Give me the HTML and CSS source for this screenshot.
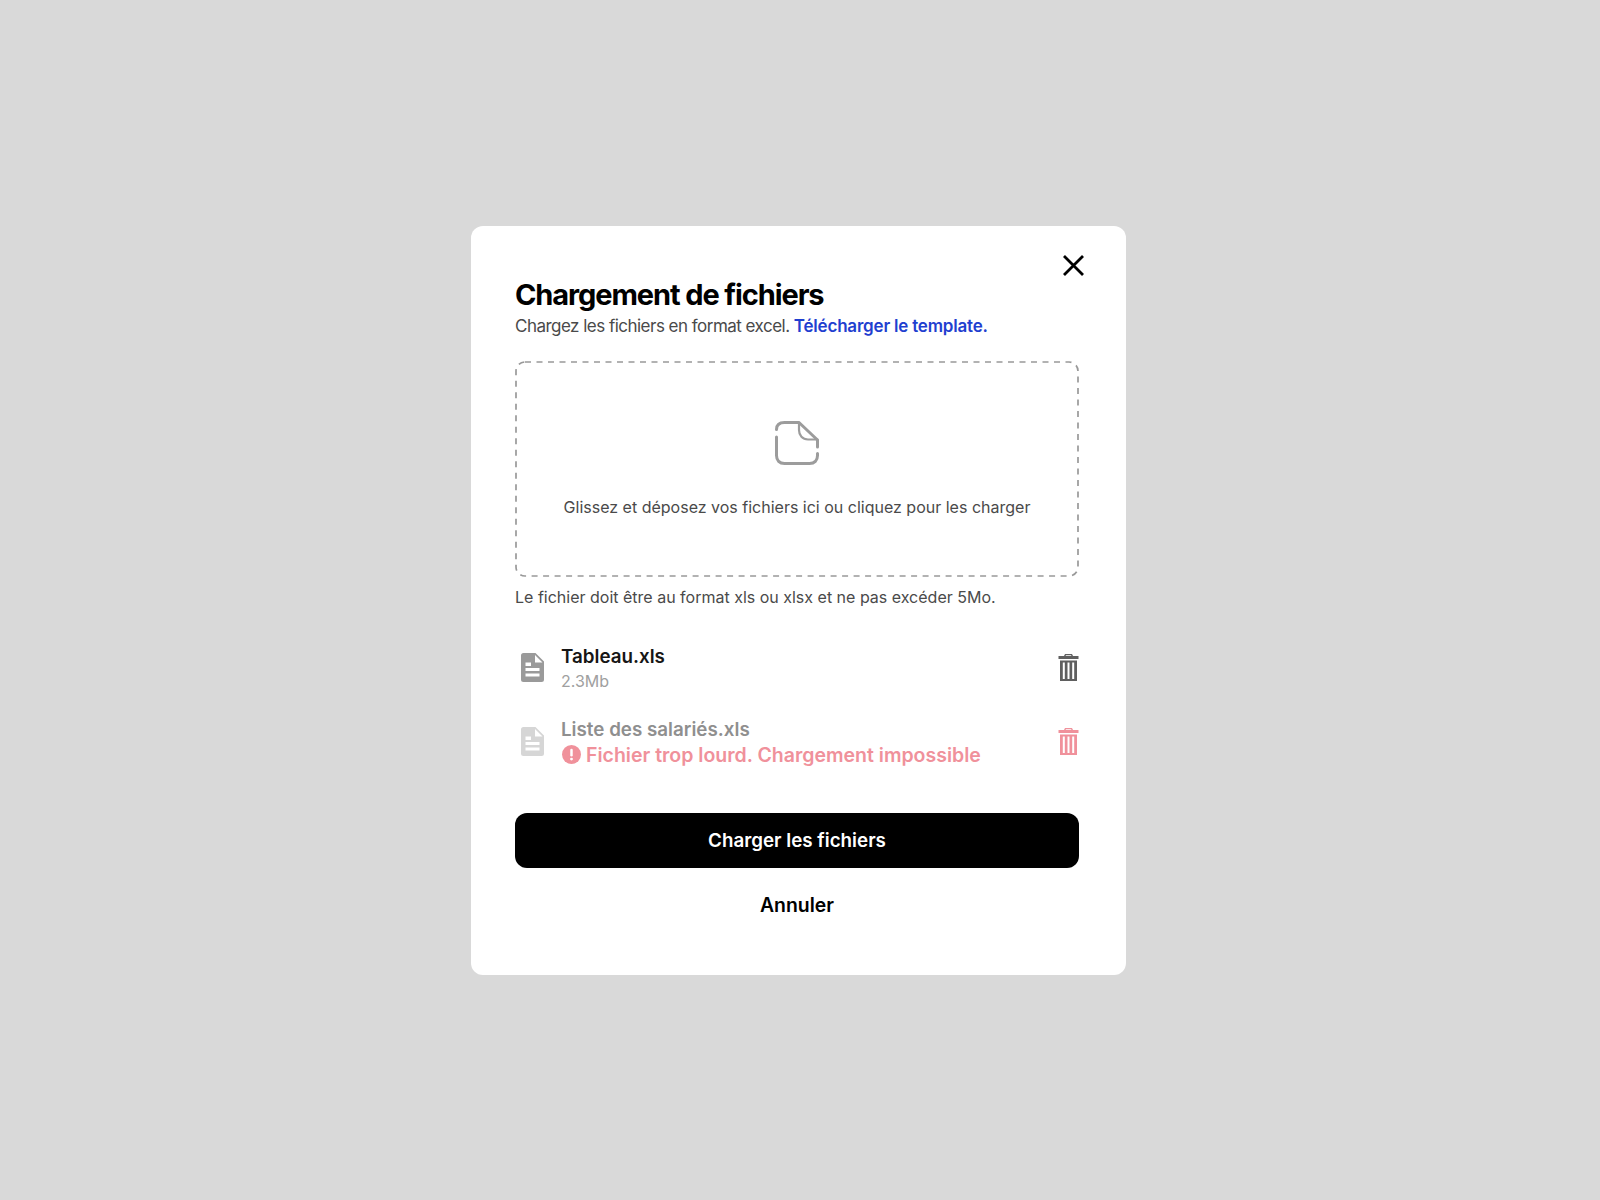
FILE: index.html
```html
<!DOCTYPE html>
<html lang="fr">
<head>
<meta charset="utf-8">
<title>Chargement de fichiers</title>
<link rel="stylesheet" href="styles.css">
</head>
<body>
<div class="modal">
  <button class="close" aria-label="Fermer">
    <svg width="24" height="24" viewBox="0 0 24 24" fill="none" stroke="#000" stroke-width="2.8"><path d="M3 3L22 22M22 3L3 22"/></svg>
  </button>
  <h1 class="title">Chargement de fichiers</h1>
  <p class="sub">Chargez les fichiers en format excel. <a class="link">Télécharger le template.</a></p>
  <div class="drop">
    <svg class="drop-border" width="564" height="216" viewBox="0 0 564 216" fill="none"><rect x="1" y="1" width="562" height="214" rx="9" stroke="#999" stroke-width="1.700" stroke-dasharray="6 5.500"/></svg>
    <svg class="drop-icon" width="46" height="46" viewBox="0 0 46 46" fill="none" stroke="#9c9c9c" stroke-width="3" stroke-linecap="round" stroke-linejoin="round">
      <path d="M2.500 9.500C2.500 5 5.500 2.500 10.500 2.500H25L43.500 20V27"/>
      <path d="M2.500 17V35.500C2.500 40.500 5.500 43.500 10.500 43.500H35.500C40.500 43.500 43.500 40.500 43.500 35.500V33.500"/>
      <path d="M25 2.500V10C25 15.500 28.500 19.500 34 19.500H43.500" stroke-width="2.200"/>
    </svg>
    <p class="drop-text">Glissez et déposez vos fichiers ici ou cliquez pour les charger</p>
  </div>
  <p class="hint">Le fichier doit être au format xls ou xlsx et ne pas excéder 5Mo.</p>
  <div class="files">
    <div class="file">
      <svg class="doc" width="23" height="29" viewBox="0 0 23 29"><path fill="#9a9a9a" fill-rule="evenodd" d="M2.500 0H14.500L23 8.500V26.500A2.500 2.500 0 0 1 20.500 29H2.500A2.500 2.500 0 0 1 0 26.500V2.500A2.500 2.500 0 0 1 2.500 0ZM14 2V9.500H21.500ZM4.500 9.500V13H10V9.500ZM4.500 15V18H18.500V15ZM4.500 20.500V23.500H18.500V20.500Z"/></svg>
      <div class="info">
        <div class="name">Tableau.xls</div>
        <div class="size">2.3Mb</div>
      </div>
      <svg class="trash" width="21" height="27" viewBox="0 0 21 27" fill="#5f5f5f"><path fill-rule="evenodd" d="M7 0H14L15 2H20.500V5H0.500V2H6ZM8 1.200L7.500 2H13.500L13 1.200Z"/><path fill-rule="evenodd" d="M2 6.500H19V27H2ZM4.800 8.500V25H6.800V8.500ZM9.500 8.500V25H11.500V8.500ZM14.200 8.500V25H16.200V8.500Z"/></svg>
    </div>
    <div class="file file-error">
      <svg class="doc" width="23" height="29" viewBox="0 0 23 29"><path fill="#d6d6d6" fill-rule="evenodd" d="M2.500 0H14.500L23 8.500V26.500A2.500 2.500 0 0 1 20.500 29H2.500A2.500 2.500 0 0 1 0 26.500V2.500A2.500 2.500 0 0 1 2.500 0ZM14 2V9.500H21.500ZM4.500 9.500V13H10V9.500ZM4.500 15V18H18.500V15ZM4.500 20.500V23.500H18.500V20.500Z"/></svg>
      <div class="info">
        <div class="name name-muted">Liste des salariés.xls</div>
        <div class="error">
          <svg class="error-icon" width="19" height="19" viewBox="0 0 20 20"><circle cx="10" cy="10" r="10" fill="#f0919b"/><rect x="8.700" y="4" width="2.600" height="8" rx="1.300" fill="#fff"/><circle cx="10" cy="14.800" r="1.500" fill="#fff"/></svg>
          <span>Fichier trop lourd. Chargement impossible</span>
        </div>
      </div>
      <svg class="trash" width="21" height="27" viewBox="0 0 21 27" fill="#f0919b"><path fill-rule="evenodd" d="M7 0H14L15 2H20.500V5H0.500V2H6ZM8 1.200L7.500 2H13.500L13 1.200Z"/><path fill-rule="evenodd" d="M2 6.500H19V27H2ZM4.800 8.500V25H6.800V8.500ZM9.500 8.500V25H11.500V8.500ZM14.200 8.500V25H16.200V8.500Z"/></svg>
    </div>
  </div>
  <button class="primary">Charger les fichiers</button>
  <button class="cancel">Annuler</button>
</div>
</body>
</html>
```
FILE: styles.css
```css
* { box-sizing: border-box; }
html, body { margin: 0; height: 100%; }
body {
  background: #d9d9d9;
  display: flex;
  align-items: center;
  justify-content: center;
  padding: 1px 3px 0 0;
  font-family: Inter, "Liberation Sans", sans-serif;
}
.modal {
  position: relative;
  width: 655px;
  height: 749px;
  background: #fff;
  border-radius: 12px;
  padding: 52px 47px 0 44px;
}
.close {
  position: absolute;
  top: 27px;
  right: 41px;
  padding: 0;
  border: 0;
  background: none;
  line-height: 0;
}
.title {
  margin: 0;
  font-size: 29px;
  line-height: 34px;
  font-weight: 700;
  letter-spacing: -1.1px;
  color: #000;
}
.sub {
  margin: 2px 0 0;
  font-size: 17px;
  line-height: 24px;
  letter-spacing: -0.52px;
  color: #4a4a4a;
}
.link { color: #1f3fd0; font-weight: 600; letter-spacing: -0.2px; }
.drop {
  position: relative;
  margin-top: 23px;
  height: 216px;
  display: flex;
  flex-direction: column;
  align-items: center;
  padding-top: 59px;
}
.drop-border { position: absolute; top: 0; left: 0; }
.drop-icon { display: block; }
.drop-text {
  margin: 29px 0 0;
  font-size: 16px;
  line-height: 24px;
  color: #4a4a4a;
}
.hint {
  margin: 8px 0 0;
  font-size: 16px;
  line-height: 24px;
  color: #4a4a4a;
}
.files {
  margin-top: 32px;
  display: flex;
  flex-direction: column;
  gap: 21px;
}
.file { display: flex; align-items: center; height: 53px; padding-left: 6px; }
.doc { flex: none; }
.info { flex: 1; margin-left: 17px; }
.trash { flex: none; }
.name { font-size: 18.800px; line-height: 26px; font-weight: 600; color: #161616; }
.name-muted { color: #8f8f8f; }
.size { font-size: 16px; line-height: 22px; color: #a0a0a0; }
.error {
  display: flex;
  align-items: center;
  gap: 5px;
  font-size: 19.500px;
  line-height: 24px;
  font-weight: 600;
  color: #f0919b;
}
.error-icon { margin-left: 1px; }
.primary {
  display: block;
  width: 100%;
  height: 55px;
  margin-top: 45px;
  border: 0;
  border-radius: 12px;
  background: #000;
  color: #fff;
  font: 600 18.800px/26px Inter, "Liberation Sans", sans-serif;
}
.cancel {
  display: block;
  width: 100%;
  margin-top: 24px;
  padding: 0;
  border: 0;
  background: none;
  color: #000;
  font: 600 19.400px/26px Inter, "Liberation Sans", sans-serif;
}
```
